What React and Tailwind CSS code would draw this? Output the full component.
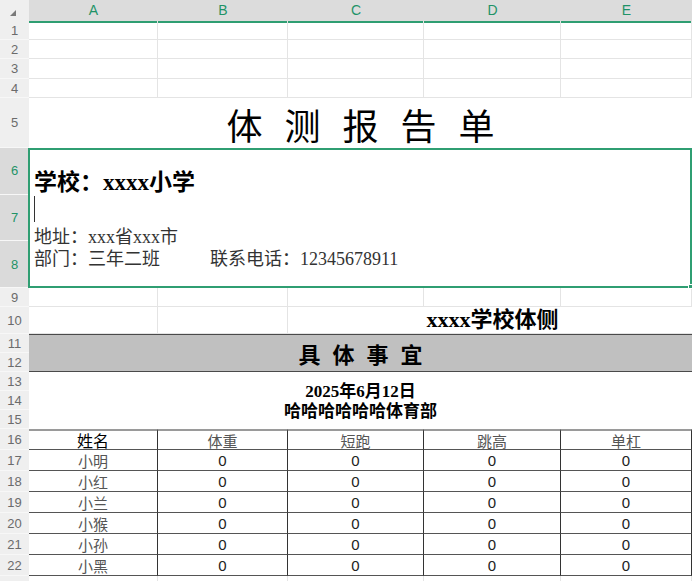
const COLS = "grid grid-cols-[29px_129px_130px_136px_137px_131px]";
const SERIF = "font-['Liberation_Serif','Noto_Sans_CJK_SC',serif]";
const SANS = "font-['Liberation_Sans','Noto_Sans_CJK_SC',sans-serif]";

function RowHead({ n, sel }) {
  return (
    <div
      className={`flex flex-1 items-center justify-center border-b border-[#f7f7f7] text-[13px] leading-none ${SANS} ${
        sel ? "bg-[#dadada] text-[#1f9367]" : "bg-[#efefef] text-[#6b6b6b]"
      }`}
    >
      {n}
    </div>
  );
}

function EmptyRow({ n, h }) {
  return (
    <div className={`${COLS} ${h}`}>
      <div className="flex flex-col">
        <RowHead n={n} />
      </div>
      {[0, 1, 2, 3, 4].map((i) => (
        <div key={i} className="border-r border-b border-[#e4e4e4]" />
      ))}
    </div>
  );
}

const students = ["小明", "小红", "小兰", "小猴", "小孙", "小黑"];
const events = ["体重", "短跑", "跳高", "单杠"];

export default function App() {
  return (
    <div className="w-[692px] h-[581px] overflow-hidden bg-white">
      {/* column header */}
      <div className={`${COLS} h-[21px]`}>
        <div className="relative bg-[#efefef] border-b-2 border-[#efefef]">
          <div className="absolute right-[13px] bottom-[5px] w-0 h-0 border-l-[6px] border-l-transparent border-b-[6px] border-b-[#7a7a7a]" />
        </div>
        {["A", "B", "C", "D", "E"].map((c) => (
          <div
            key={c}
            className={`flex items-center justify-center bg-[#dcdcdc] border-b-2 border-[#2f9e72] text-[14px] text-[#1f9367] ${SANS}`}
          >
            {c}
          </div>
        ))}
      </div>

      <EmptyRow n={1} h="h-[19px]" />
      <EmptyRow n={2} h="h-[19px]" />
      <EmptyRow n={3} h="h-[20px]" />
      <EmptyRow n={4} h="h-[19px]" />

      {/* title row 5 */}
      <div className={`${COLS} h-[50px]`}>
        <div className="flex flex-col">
          <RowHead n={5} />
        </div>
        <div className="col-span-5 flex items-center justify-center gap-[22px] pt-[2px] text-[36px] leading-none text-black font-['Noto_Sans_CJK_SC',sans-serif]">
          {["体", "测", "报", "告", "单"].map((c) => (
            <span key={c}>{c}</span>
          ))}
        </div>
      </div>

      {/* rows 6-8 merged, selected */}
      <div className={`${COLS} h-[140px]`}>
        <div className="flex flex-col">
          <RowHead n={6} sel />
          <RowHead n={7} sel />
          <RowHead n={8} sel />
        </div>
        <div className="relative col-span-5 -ml-[1px] border-2 border-[#2f9e72] pl-[4px] pt-[20px] text-[#333]">
          <div className={`text-[23px] leading-[26px] font-bold text-black ${SERIF}`}>学校：xxxx小学</div>
          <div className="w-[1px] h-[26px] bg-[#333]" />
          <div className={`mt-[4px] text-[18px] leading-[22px] ${SERIF}`}>地址：xxx省xxx市</div>
          <div className={`text-[18px] leading-[22px] ${SERIF}`}>
            <span className="inline-block w-[176px]">部门：三年二班</span>
            <span>联系电话：12345678911</span>
          </div>
          <div className="absolute -right-[3px] -bottom-[3px] w-[5px] h-[5px] bg-[#2f9e72] border border-white" />
        </div>
      </div>

      <EmptyRow n={9} h="h-[19px]" />

      {/* row 10 */}
      <div className={`${COLS} h-[27px]`}>
        <div className="flex flex-col">
          <RowHead n={10} />
        </div>
        <div className="border-r border-b border-[#e4e4e4]" />
        <div className="border-r border-b border-[#e4e4e4]" />
        <div className="border-b border-[#e4e4e4]" />
        <div className={`flex items-center justify-center whitespace-nowrap border-b border-[#e4e4e4] text-[22px] leading-none font-bold text-black ${SERIF}`}>
          xxxx学校体侧
        </div>
        <div className="border-b border-[#e4e4e4]" />
      </div>

      {/* rows 11-12 grey band */}
      <div className={`${COLS} h-[38px]`}>
        <div className="flex flex-col">
          <RowHead n={11} />
          <RowHead n={12} />
        </div>
        <div className="col-span-5 flex items-center justify-center gap-[12px] bg-[#c0c0c0] border-y border-[#4a4a4a] text-[22px] font-bold text-black font-['Noto_Sans_CJK_SC',sans-serif]">
          {["具", "体", "事", "宜"].map((c) => (
            <span key={c}>{c}</span>
          ))}
        </div>
      </div>

      {/* rows 13-15 */}
      <div className={`${COLS} h-[57px]`}>
        <div className="flex flex-col">
          <RowHead n={13} />
          <RowHead n={14} />
          <RowHead n={15} />
        </div>
        <div className={`col-span-5 flex flex-col items-center justify-center pt-[3px] text-[17px] leading-[20px] font-bold text-black ${SERIF}`}>
          <div>2025年6月12日</div>
          <div>哈哈哈哈哈哈体育部</div>
        </div>
      </div>

      {/* table header row 16 */}
      <div className={`${COLS} h-[21px]`}>
        <div className="flex flex-col">
          <RowHead n={16} />
        </div>
        <div className="flex items-center justify-center border-t-2 border-t-[#9a9a9a] border-r border-r-[#333] border-b border-b-[#555] text-[16px] leading-none text-black font-['Noto_Sans_CJK_SC',sans-serif]">
          姓名
        </div>
        {events.map((e) => (
          <div
            key={e}
            className="flex items-center justify-center border-t-2 border-t-[#9a9a9a] border-r border-r-[#333] border-b border-b-[#555] text-[15px] leading-none text-[#555] font-['Noto_Sans_CJK_SC',sans-serif]"
          >
            {e}
          </div>
        ))}
      </div>

      {/* student rows 17-22 */}
      {students.map((s, idx) => (
        <div key={s} className={`${COLS} h-[21px]`}>
          <div className="flex flex-col">
            <RowHead n={17 + idx} />
          </div>
          <div className="flex items-center justify-center border-r border-r-[#333] border-b border-b-[#555] text-[15px] leading-none text-[#555] font-['Noto_Sans_CJK_SC',sans-serif]">
            {s}
          </div>
          {events.map((e) => (
            <div
              key={e}
              className={`flex items-center justify-center border-r border-r-[#333] border-b border-b-[#555] text-[15px] leading-none text-[#222] ${SANS}`}
            >
              0
            </div>
          ))}
        </div>
      ))}

      <EmptyRow n={23} h="h-[19px]" />
    </div>
  );
}
